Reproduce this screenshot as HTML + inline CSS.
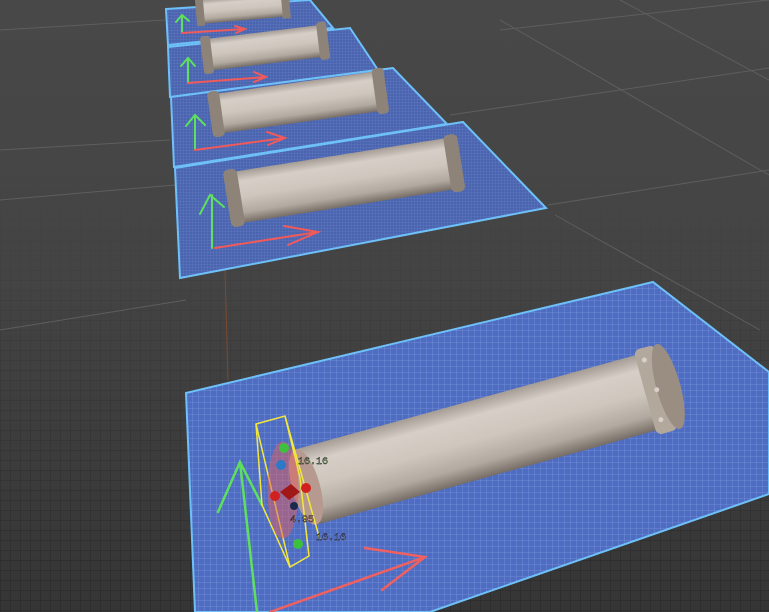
<!DOCTYPE html>
<html><head><style>
html,body{margin:0;padding:0;background:#454545;}
svg{display:block}
text{font-family:"Liberation Mono",monospace;font-size:10px;}
</style></head><body>
<svg width="769" height="612" viewBox="0 0 769 612" xmlns="http://www.w3.org/2000/svg">
<defs>
<linearGradient id="bg" x1="0" y1="0" x2="0" y2="1">
<stop offset="0" stop-color="#484848"/><stop offset="0.45" stop-color="#444"/><stop offset="1" stop-color="#353535"/>
</linearGradient>
<linearGradient id="fade" x1="0" y1="0" x2="0" y2="1">
<stop offset="0" stop-color="#fff" stop-opacity="0"/><stop offset="1" stop-color="#fff" stop-opacity="1"/>
</linearGradient>
<mask id="m"><rect y="180" width="769" height="432" fill="url(#fade)"/></mask>
<pattern id="bgrid" width="10" height="10" patternUnits="userSpaceOnUse">
<path d="M0 0H10M0 0V10" stroke="#1e1e1e" stroke-width="1.4"/>
</pattern>
<pattern id="pg" width="6" height="6" patternUnits="userSpaceOnUse">
<rect width="6" height="6" fill="#4d6cc2"/><path d="M0 0H6M0 0V6" stroke="#7a93d8" stroke-width="0.8"/>
</pattern>
<pattern id="pgs" width="3" height="3" patternUnits="userSpaceOnUse">
<rect width="3" height="3" fill="#4a64b0"/><path d="M0 0H3M0 0V3" stroke="#6e86c8" stroke-width="0.5"/>
</pattern>
<linearGradient id="pipe" x1="0" y1="0" x2="0" y2="1">
<stop offset="0" stop-color="#a59c94"/><stop offset="0.2" stop-color="#d6cfc7"/><stop offset="0.5" stop-color="#cfc7be"/><stop offset="0.8" stop-color="#b2aaa0"/><stop offset="1" stop-color="#766e66"/>
</linearGradient>
</defs>
<rect width="769" height="612" fill="url(#bg)"/>
<rect y="180" width="769" height="432" fill="url(#bgrid)" opacity="0.45" mask="url(#m)"/>
<g stroke="#5e5e5e" stroke-width="1" fill="none">
<path d="M500 30 L769 0"/><path d="M450 115 L769 68"/>
<path d="M0 200 L175 185"/><path d="M0 150 L170 140"/><path d="M0 30 L165 20"/>
<path d="M548 205 L769 170"/><path d="M0 330 L186 300"/>
<path d="M620 0 L769 80"/><path d="M500 20 L769 175"/><path d="M555 215 L760 330"/>
</g>
<path d="M225 270 L228 380" stroke="#7a4a30" stroke-width="1"/>
<!-- planes -->
<polygon points="166,9 310,0 333,28 168,45" fill="url(#pgs)" stroke="#6ec0f8" stroke-width="2"/>
<polygon points="168,47 350,28 378,70 170,97" fill="url(#pgs)" stroke="#6ec0f8" stroke-width="2"/>
<polygon points="171,97 393,68 447,124 174,167" fill="url(#pgs)" stroke="#6ec0f8" stroke-width="2"/>
<polygon points="175,168 463,122 546,208 180,278" fill="url(#pgs)" stroke="#6ec0f8" stroke-width="2"/>
<polygon points="186,393 653,282 769,372 769,494 430,612 195,612" fill="url(#pg)" stroke="#6ec0f8" stroke-width="2"/>
<!-- small pipes -->
<g transform="translate(200,12) rotate(-5)"><rect x="0" y="-12" width="88" height="24" rx="4" fill="url(#pipe)"/><rect x="-4" y="-14" width="8" height="28" fill="#8a7f74"/><rect x="82" y="-14" width="8" height="28" fill="#8a7f74"/></g>
<g transform="translate(207,55) rotate(-7)"><rect x="0" y="-16" width="118" height="32" rx="5" fill="url(#pipe)"/><rect x="-5" y="-19" width="10" height="38" rx="3" fill="#8e8378"/><rect x="112" y="-19" width="10" height="38" rx="3" fill="#8e8378"/></g>
<g transform="translate(216,114) rotate(-8)"><rect x="0" y="-20" width="168" height="40" rx="6" fill="url(#pipe)"/><rect x="-6" y="-23" width="12" height="46" rx="4" fill="#8e8378"/><rect x="160" y="-23" width="12" height="46" rx="4" fill="#8e8378"/></g>
<g transform="translate(234,198) rotate(-9)"><rect x="0" y="-26" width="226" height="52" rx="8" fill="url(#pipe)"/><rect x="-7" y="-29" width="14" height="58" rx="5" fill="#8e8378"/><rect x="216" y="-29" width="14" height="58" rx="5" fill="#8e8378"/></g>
<!-- small arrows -->
<g fill="none" stroke-width="2" stroke-linecap="round">
<path d="M182 33 V15 M176 22 L182 15 L189 21" stroke="#5de05d"/><path d="M182 33 L245 29 M235 26 L245 29 L236 33" stroke="#f05a5a"/>
<path d="M188 83 V58 M181 66 L188 58 L195 66" stroke="#5de05d"/><path d="M188 83 L266 77 M254 72 L266 77 L254 82" stroke="#f05a5a"/>
<path d="M195 150 V115 M186 126 L195 115 L205 125" stroke="#5de05d"/><path d="M195 150 L285 138 M267 132 L285 138 L268 145" stroke="#f05a5a"/>
<path d="M212 248 V195 M200 214 L210 195 L224 207" stroke="#5de05d"/><path d="M215 248 L318 232 M284 226 L318 232 L288 245" stroke="#f05a5a"/>
</g>
<!-- big pipe -->
<g transform="translate(306,487) rotate(-15.5)">
<rect x="0" y="-39" width="370" height="78" fill="url(#pipe)"/>
<ellipse cx="370" cy="0" rx="18" ry="42" fill="#8a7e72"/>
<rect x="352" y="-44" width="22" height="88" rx="6" fill="#b3a89c"/>
<ellipse cx="376" cy="0" rx="12" ry="44" fill="#9a8e82"/>
<circle cx="360" cy="-32" r="2.5" fill="#d8d0c8"/><circle cx="364" cy="0" r="2.5" fill="#d8d0c8"/><circle cx="360" cy="30" r="2.5" fill="#d8d0c8"/>
<ellipse cx="0" cy="0" rx="14" ry="39" fill="#b69a90"/>
</g>
<!-- big arrows -->
<g fill="none" stroke-width="2.5" stroke-linecap="round">
<path d="M257 612 L240 462 M218 512 L240 462 L262 505" stroke="#5de05d"/>
<path d="M270 612 L425 557 M365 548 L425 557 L382 590" stroke="#f06060"/>
</g>
<!-- gizmo -->
<g fill="none" stroke="#f3e83a" stroke-width="1.5">
<polygon points="256,424 285,416 300,478 309,556 290,567 262,505"/>
<path d="M285 416 L320 540 M256 424 L290 567"/>
</g>
<ellipse cx="283" cy="490" rx="15" ry="48" fill="#e06060" opacity="0.5" stroke="#e06060"/>
<circle cx="284" cy="448" r="5" fill="#3ec03e"/><circle cx="281" cy="465" r="5" fill="#2e78c8"/>
<circle cx="275" cy="496" r="5" fill="#d02020"/><circle cx="306" cy="488" r="5" fill="#d02020"/>
<path d="M280 492 L291 484 L300 492 L289 500Z" fill="#a01818"/>
<circle cx="294" cy="506" r="4" fill="#1a2a48"/><circle cx="298" cy="544" r="5" fill="#3ec03e"/>
<text x="298" y="464" fill="#b8f0a8" stroke="#000" stroke-width="0.4">16.16</text>
<text x="290" y="522" fill="#f0b0b0" stroke="#000" stroke-width="0.4">4.95</text>
<text x="316" y="540" fill="#c0c0f8" stroke="#000" stroke-width="0.4">16.16</text>
</svg>
</body></html>
